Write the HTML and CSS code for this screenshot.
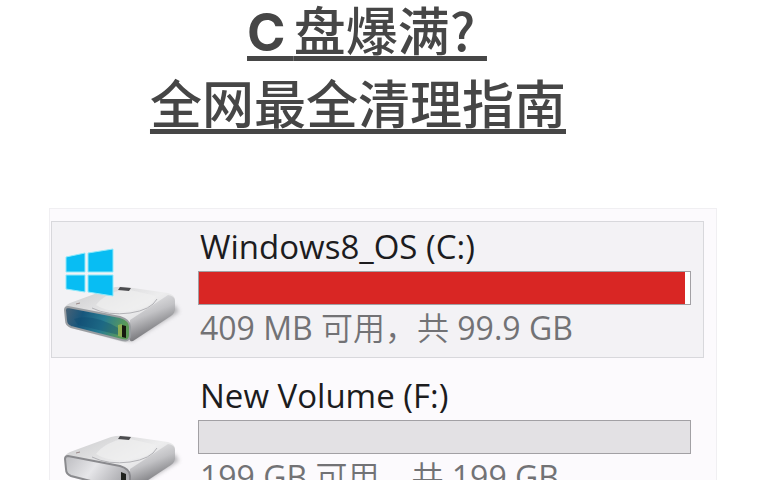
FILE: index.html
```
<!DOCTYPE html>
<html lang="zh-CN">
<head>
    <meta charset="UTF-8">
    <meta name="viewport" content="width=device-width, initial-scale=1.0">
    <title>C 盘爆满?全网最全清理指南</title>
    <link rel="stylesheet" href="styles.css">
</head>
<body>
    <h1><span class="first"><span class="latin">C&thinsp;</span>盘爆满?&nbsp;</span><br>全网最全清理指南</h1>

    <main class="drives">
        <!-- C: -->
        <section class="drive selected">
            <svg class="drive-icon" viewBox="0 0 124 104" aria-hidden="true">
                <defs>
                    <linearGradient id="top" x1="0" y1="0" x2="1" y2="1">
                        <stop offset="0" stop-color="#c9c9cb"/>
                        <stop offset="0.5" stop-color="#ededee"/>
                        <stop offset="1" stop-color="#c4c4c7"/>
                    </linearGradient>
                    <linearGradient id="side" x1="0" y1="0" x2="0.4" y2="1">
                        <stop offset="0" stop-color="#f4f4f5"/>
                        <stop offset="0.5" stop-color="#c2c2c5"/>
                        <stop offset="1" stop-color="#66666a"/>
                    </linearGradient>
                    <linearGradient id="front-blue" x1="0" y1="0" x2="1" y2="0.2">
                        <stop offset="0" stop-color="#4c6275"/>
                        <stop offset="0.3" stop-color="#17567c"/>
                        <stop offset="0.65" stop-color="#287c92"/>
                        <stop offset="1" stop-color="#5b9a58"/>
                    </linearGradient>
                    <linearGradient id="front-grey" x1="0" y1="0" x2="1" y2="0.4">
                        <stop offset="0" stop-color="#bcbcc0"/>
                        <stop offset="0.5" stop-color="#e6e6e9"/>
                        <stop offset="1" stop-color="#adadb1"/>
                    </linearGradient>
                    <filter id="soft" x="-20%" y="-20%" width="140%" height="140%">
                        <feGaussianBlur stdDeviation="2"/>
                    </filter>
                    <g id="case">
                        <path d="M26 84 L70 96 L117 67 L113 60Z" fill="#88888c" opacity="0.6" filter="url(#soft)"/>
                        <path d="M3 64 Q3 60 8 58 L49 43 Q56 41 64 42 L106 48 Q113 50 113 55 L113 65 Q113 68 109 71 L71 96 Q67 98 61 97 L9 83 Q4 81 4 77Z" fill="url(#top)"/>
                        <path d="M68 75 L106 50 Q113 51 113 56 L113 65 Q113 68 109 71 L71 96 Q67 97 67 92Z" fill="url(#side)"/>
                        <path d="M30 63 Q46 71 68 68 Q89 65 95 54" fill="none" stroke="#b2b2b6" stroke-width="1"/>
                        <path d="M34 60 Q43 48 64 44 L94 51 Q91 63 68 66 Q46 68 34 60Z" fill="#efeff0" opacity="0.7"/>
                        <path d="M58 42 L69 43 L67 46 L56 45Z" fill="#4c4c4f"/>
                        <path d="M14 59 L18 58" stroke="#9a8989" stroke-width="1"/>
                    </g>
                    <path id="front" d="M6 62 L58 72 Q68 75 68 82 L68 90 Q68 97 60 95 L9 82 Q4 80 4 75 L3 65 Q3 62 6 62Z"/>
                </defs>
                <use href="#case"/>
                <use href="#front" fill="url(#front-blue)" stroke="#9a9ea2" stroke-width="2"/>
                <path d="M12 74 Q31 68 58 84 L57 90 L16 80Z" fill="#0d4a70" opacity="0.4"/>
                <path d="M60 80 L64 81 L64 93 L60 92Z" fill="#15180f"/>
                <path d="M56 80 L60 79 L60 92 L56 91Z" fill="#8dae55"/>
                <g fill="#08bdf3" stroke="#8fe9fb" stroke-width="1">
                    <path d="M4 12 L23 8 L23 27 L4 27Z"/>
                    <path d="M26 8 L51 4 L51 27 L26 27Z"/>
                    <path d="M4 30 L23 30 L23 47 L4 44Z"/>
                    <path d="M26 30 L51 30 L51 51 L26 47Z"/>
                </g>
            </svg>
            <div class="info">
                <h2>Windows8_OS (C:)</h2>
                <div class="bar"><div class="used" style="width: 99%"></div></div>
                <p>409 MB <span class="cjk">可用，共</span> 99.9 GB</p>
            </div>
        </section>

        <!-- F: -->
        <section class="drive">
            <svg class="drive-icon" viewBox="0 0 124 104" aria-hidden="true">
                <use href="#case"/>
                <use href="#front" fill="url(#front-grey)" stroke="#8a8a8e" stroke-width="2"/>
                <path d="M59 78 L64 80 L64 93 L59 92Z" fill="#20221e"/>
            </svg>
            <div class="info">
                <h2>New Volume (F:)</h2>
                <div class="bar empty"></div>
                <p>199 GB <span class="cjk">可用，共</span> 199 GB</p>
            </div>
        </section>
    </main>
</body>
</html>
```
FILE: styles.css
```
* {
    box-sizing: border-box;
}
body {
    margin: 0;
    background: #fff;
    font-family: "Open Sans", "Noto Sans CJK SC", sans-serif;
}
h1 {
    margin: -8px 52px 70px 0;
    text-align: center;
    font-family: "Noto Sans CJK SC", sans-serif;
    font-size: 52px;
    font-weight: 500;
    line-height: 73px;
    color: #464646;
    text-decoration: underline;
    text-decoration-thickness: 5px;
    text-underline-offset: 5px;
    text-decoration-skip-ink: none;
}
.first {
    margin-left: 18px;
}
.latin {
    font-family: Inter, sans-serif;
    font-weight: bold;
    line-height: 1;
}
.drives {
    margin: 0 51px 0 49px;
    padding: 12px 12px 12px 1px;
    background: #fcfafd;
    border: 1px solid #f0eff2;
}
.drive {
    display: flex;
    align-items: flex-start;
    gap: 12px;
    height: 137px;
    margin-bottom: 12px;
    padding: 5px 12px 0 10px;
    border: 1px solid transparent;
}
.selected {
    background: #f3f2f5;
    border-color: #d8d8dc;
}
.drive-icon {
    flex: none;
    width: 124px;
    height: 104px;
    margin-top: 18px;
}
.info {
    flex: 1;
}
h2, p {
    margin: 0;
    padding-left: 2px;
    font-weight: normal;
    white-space: nowrap;
}
h2 {
    margin-bottom: 4px;
    font-size: 33px;
    line-height: 40px;
    color: #1c1c1e;
}
p {
    font-size: 32px;
    line-height: 46px;
    color: #727275;
}
.cjk {
    font-family: "Noto Sans CJK SC", sans-serif;
    font-weight: 350;
    line-height: 1;
}
.bar {
    height: 34px;
    border: 1px solid #a2a0a4;
    background: #fff;
}
.used {
    height: 100%;
    background: #d92624;
}
.empty {
    background: #e3e1e4;
}
```
